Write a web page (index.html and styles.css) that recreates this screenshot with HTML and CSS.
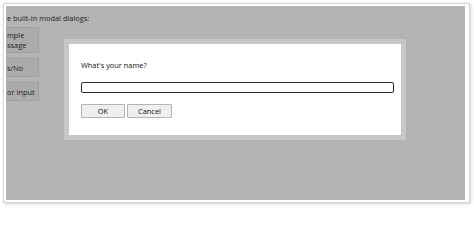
FILE: index.html
```html
<!DOCTYPE html>
<html>
<head>
<meta charset="utf-8">
<link rel="stylesheet" href="styles.css">
</head>
<body>
<div class="frame">
  <div class="screen">
    <div class="page">
      <p class="intro">e built-in modal dialogs:</p>
      <div class="demo-buttons">
        <div class="demo-btn tall">mple<br>ssage</div>
        <div class="demo-btn">s/No</div>
        <div class="demo-btn">or Input</div>
      </div>
    </div>
    <div class="modal">
      <div class="modal-body">
        <p class="prompt">What's your name?</p>
        <div class="field"></div>
        <div class="actions">
          <div class="btn">OK</div>
          <div class="btn">Cancel</div>
        </div>
      </div>
    </div>
  </div>
</div>
</body>
</html>
```

FILE: styles.css
```css
html, body {
  margin: 0;
  padding: 0;
  background: #ffffff;
}
body {
  font-family: "Open Sans", "Noto Sans", sans-serif;
  font-size: 7.4px;
  width: 474px;
  height: 207px;
  overflow: hidden;
}
.frame {
  margin: 3px 0 0 3px;
  width: 467px;
  box-sizing: border-box;
  border: 1px solid #d2d2d2;
  padding: 2px;
  background: #ffffff;
  box-shadow: 1px 1px 3px rgba(0, 0, 0, 0.18);
}
.screen {
  position: relative;
  width: 459px;
  height: 194px;
  background: #b3b3b3;
  overflow: hidden;
}
.page {
  padding-top: 7px;
  color: #1f1f1f;
}
.intro {
  margin: 0 0 4px 1px;
  line-height: 10px;
  height: 10px;
}
.demo-buttons {
  display: flex;
  flex-direction: column;
  gap: 5px;
}
.demo-btn {
  width: 33px;
  height: 19px;
  box-sizing: border-box;
  border: 1px solid #a0a0a0;
  border-left: none;
  background: #ababab;
  line-height: 10px;
  padding: 4px 0 0 1px;
  color: #1f1f1f;
}
.demo-btn.tall {
  height: 26px;
  padding-top: 2px;
}
.modal {
  position: absolute;
  left: 58px;
  top: 33px;
  width: 342px;
  height: 101px;
  box-sizing: border-box;
  border: 5px solid #c7c7c7;
  background: #ffffff;
}
.modal-body {
  padding: 16px 7px 0 12px;
  color: #111111;
}
.prompt {
  margin: 0;
  line-height: 10px;
  height: 10px;
}
.field {
  margin-top: 12px;
  height: 11px;
  box-sizing: border-box;
  border: 1px solid #2a2a2a;
  border-radius: 2px;
  background: #ffffff;
}
.actions {
  display: flex;
  gap: 2px;
  margin-top: 11px;
}
.btn {
  width: 44px;
  height: 14px;
  box-sizing: border-box;
  border: 1px solid #b4b4b4;
  border-radius: 1px;
  background: #efefef;
  text-align: center;
  line-height: 12px;
  color: #111111;
}
.btn + .btn {
  width: 45px;
}
```
